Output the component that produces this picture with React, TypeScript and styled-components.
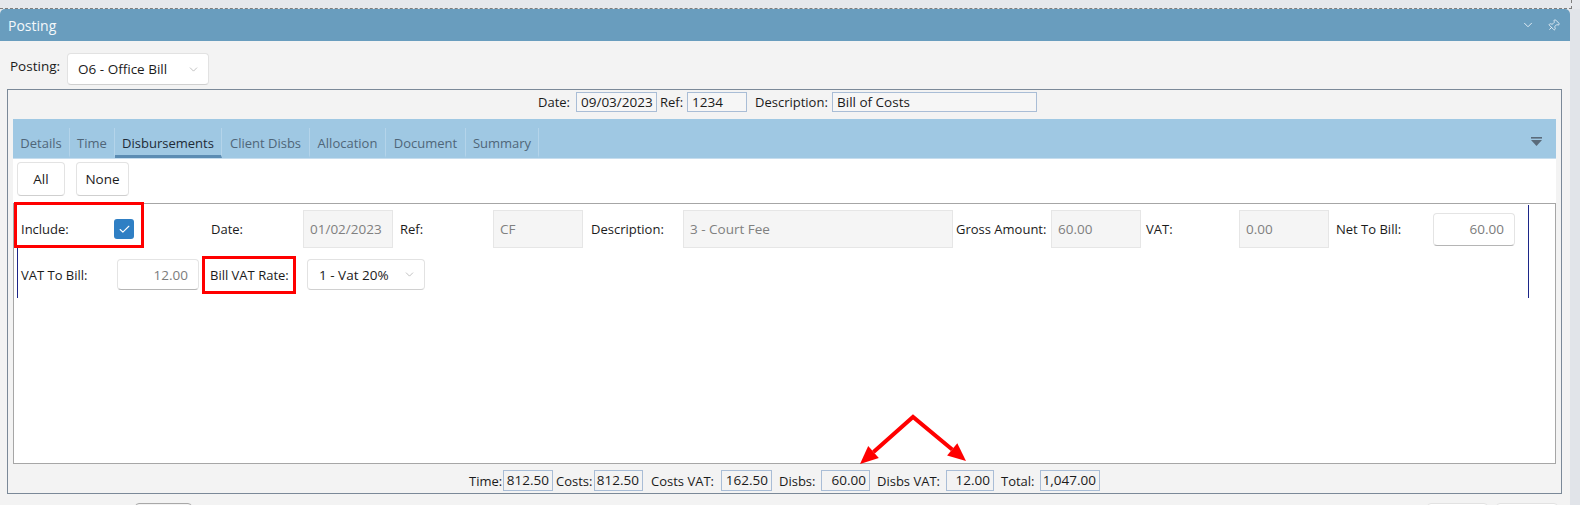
import React from "react";
import styled, { createGlobalStyle } from "styled-components";
import { ChevronDown, Pin, Check } from "lucide-react";

const GlobalStyle = createGlobalStyle`
  html, body {
    margin: 0;
    padding: 0;
    background: #e6e8ec;
    overflow: hidden;
    font-family: "Open Sans", "Noto Sans", sans-serif;
    font-size: 13px;
    color: #1b1b1b;
  }
  * { box-sizing: border-box; }
`;

const Page = styled.div`
  position: relative;
  width: 1580px;
  height: 505px;
  overflow: hidden;
  display: flex;
  flex-direction: column;
`;

const TopStrip = styled.div`
  flex: none;
  width: 1572px;
  height: 9px;
  border-bottom: 1px dashed #7d7d7d;
  border-right: 1px dashed #7d7d7d;
`;

const MainRow = styled.div`
  flex: 1;
  display: flex;
  min-height: 0;
`;

const Window = styled.div`
  width: 1570px;
  background: #f3f3f3;
  border-radius: 5px 5px 0 0;
  display: flex;
  flex-direction: column;
`;

const Gutter = styled.div`
  flex: 1;
  background: #e1e4e9;
`;

const TitleBar = styled.div`
  height: 32px;
  flex: none;
  background: #699dbe;
  border-radius: 5px 5px 0 0;
  display: flex;
  align-items: center;
  padding: 0 10px 0 8px;
  color: #f4f8fb;
  font-size: 14px;
`;

const TitleText = styled.span`
  flex: 1;
`;

const TitleIcons = styled.div`
  display: flex;
  align-items: center;
  gap: 12px;
  color: #e8f1f8;
`;

const PinIcon = styled(Pin)`
  transform: rotate(45deg);
`;

const PostingRow = styled.div`
  height: 48px;
  flex: none;
  display: flex;
  align-items: flex-start;
  gap: 7px;
  padding: 12px 0 0 10px;
`;

const PostingLabel = styled.span`
  line-height: 20px;
  padding-top: 3px;
  font-size: 13.5px;
`;

const Select = styled.div<{ $w: number }>`
  width: ${(p) => p.$w}px;
  height: 32px;
  background: #fff;
  border: 1px solid #e2e2e2;
  border-bottom-color: #d0d0d0;
  border-radius: 4px;
  padding: 0 8px 0 10px;
  display: flex;
  align-items: center;
  justify-content: space-between;
  font-size: 13.5px;
  color: #1b1b1b;
`;

const GroupBox = styled.div`
  margin-left: 7px;
  width: 1555px;
  height: 405px;
  flex: none;
  border: 1px solid #7b8998;
  display: flex;
  flex-direction: column;
  padding: 0 5px;
`;

const HeaderRow = styled.div`
  height: 29px;
  flex: none;
  display: flex;
  align-items: flex-start;
  justify-content: center;
  padding: 2px 0 0 6px;
`;

const HeaderLabel = styled.span<{ $w: number }>`
  width: ${(p) => p.$w}px;
  line-height: 20px;
  white-space: nowrap;
`;

const HeaderBox = styled.div<{ $w: number; $mr?: number }>`
  width: ${(p) => p.$w}px;
  margin-right: ${(p) => p.$mr ?? 0}px;
  height: 20px;
  border: 1px solid #a9bdd6;
  background: #f6f6f6;
  padding: 0 4px;
  line-height: 18px;
  font-size: 13.5px;
  white-space: nowrap;
`;

const TabBar = styled.div`
  height: 40px;
  flex: none;
  background: #9fc8e3;
  border-bottom: 1px solid #c6ddee;
  display: flex;
  align-items: flex-end;
`;

const Tab = styled.div<{ $w: number; $active?: boolean }>`
  width: ${(p) => p.$w}px;
  height: 30px;
  display: flex;
  align-items: center;
  justify-content: center;
  padding-top: 2px;
  border-right: 1px solid #b4d4ea;
  border-bottom: 3px solid ${(p) => (p.$active ? "#5b8cb3" : "transparent")};
  color: ${(p) => (p.$active ? "#1e2b37" : "#4f6679")};
  font-size: 13px;
  white-space: nowrap;
`;

const FilterIcon = styled.svg`
  margin-left: auto;
  margin-right: 14px;
  align-self: center;
  margin-top: 5px;
`;

const TabContent = styled.div`
  flex: 1;
  background: #fff;
  display: flex;
  flex-direction: column;
  min-height: 0;
`;

const ButtonRow = styled.div`
  display: flex;
  gap: 11px;
  padding: 3px 4px 0;
`;

const PlainButton = styled.div<{ $w: number }>`
  width: ${(p) => p.$w}px;
  height: 34px;
  background: #fff;
  border: 1px solid #e3e3e3;
  border-bottom-color: #cfcfcf;
  border-radius: 4px;
  display: flex;
  align-items: center;
  justify-content: center;
  font-size: 13.5px;
`;

const ListPanel = styled.div`
  margin-top: 7px;
  flex: 1;
  border: 1px solid #a6a6a6;
  padding: 1px 0 0 3px;
`;

const Item = styled.div`
  width: 1512px;
  border-right: 1px solid #1c2688;
`;

const FieldRow = styled.div<{ $first?: boolean }>`
  display: flex;
  align-items: center;
  ${(p) =>
    p.$first
      ? `height: 43px; padding: 5px 0 0 4px;`
      : `height: 50px; padding: 11px 0 8px 3px; border-left: 1px solid #1c2688;`}
`;

const Annotated = styled.div<{ $w: number; $ml?: number }>`
  position: relative;
  width: ${(p) => p.$w}px;
  margin-left: ${(p) => p.$ml ?? 0}px;
  flex: none;
  display: flex;
  align-items: center;
  align-self: stretch;
`;

const RedBox = styled.div<{ $l: number; $t: number; $w: number; $h: number }>`
  position: absolute;
  left: ${(p) => p.$l}px;
  top: ${(p) => p.$t}px;
  width: ${(p) => p.$w}px;
  height: ${(p) => p.$h}px;
  border: 3px solid #ff0000;
  pointer-events: none;
`;

const FieldLabel = styled.span<{ $w: number }>`
  width: ${(p) => p.$w}px;
  flex: none;
  white-space: nowrap;
  font-size: 13px;
`;

const Checkbox = styled.div`
  width: 20px;
  height: 20px;
  border-radius: 3px;
  background: #2f7fc4;
  display: flex;
  align-items: center;
  justify-content: center;
  color: #fff;
`;

const ReadOnlyBox = styled.div<{ $w: number; $mr?: number }>`
  width: ${(p) => p.$w}px;
  margin-right: ${(p) => p.$mr ?? 0}px;
  flex: none;
  height: 38px;
  background: #f5f5f5;
  border: 1px solid #e6e6e6;
  color: #808080;
  padding-left: 6px;
  display: flex;
  align-items: center;
  white-space: nowrap;
  font-size: 13.5px;
`;

const NumberBox = styled.div<{ $w: number; $h: number }>`
  width: ${(p) => p.$w}px;
  height: ${(p) => p.$h}px;
  flex: none;
  background: #fff;
  border: 1px solid #e4e4e4;
  border-bottom-color: #b5b5b5;
  border-radius: 4px;
  color: #7c7c7c;
  padding-right: 10px;
  display: flex;
  align-items: center;
  justify-content: flex-end;
  font-size: 13.5px;
`;

const RateSelect = styled(Select)`
  height: 31px;
  padding-left: 11px;
  flex: none;
`;

const TotalsRow = styled.div`
  height: 29px;
  flex: none;
  display: flex;
  align-items: center;
  justify-content: center;
  padding-top: 4px;
`;

const TotalLabel = styled.span<{ $w: number }>`
  width: ${(p) => p.$w}px;
  white-space: nowrap;
`;

const TotalBox = styled.div<{ $w: number; $mr?: number }>`
  width: ${(p) => p.$w}px;
  margin-right: ${(p) => p.$mr ?? 0}px;
  height: 21px;
  border: 1px solid #a9bdd6;
  padding-right: 3px;
  text-align: right;
  line-height: 19px;
  font-size: 13.5px;
  white-space: nowrap;
`;

const Footer = styled.div`
  display: flex;
  gap: 8px;
  padding: 9px 12px 0 135px;
`;

const FooterButton = styled.div<{ $w: number; $muted?: boolean }>`
  width: ${(p) => p.$w}px;
  height: 30px;
  border-radius: 4px;
  background: ${(p) => (p.$muted ? "#f3f3f3" : "#fff")};
  border: 1px solid ${(p) => (p.$muted ? "#a8a8a8" : "#e2e2e2")};
  &:nth-child(2) {
    margin-left: auto;
  }
`;

const Overlay = styled.svg`
  position: absolute;
  left: 0;
  top: 0;
  pointer-events: none;
`;

const tabs = [
  { name: "Details", w: 57 },
  { name: "Time", w: 45 },
  { name: "Disbursements", w: 107, active: true },
  { name: "Client Disbs", w: 88 },
  { name: "Allocation", w: 76 },
  { name: "Document", w: 80 },
  { name: "Summary", w: 73 },
];

const totals = [
  { label: "Time:", lw: 34, value: "812.50", bw: 50, mr: 3 },
  { label: "Costs:", lw: 38, value: "812.50", bw: 49, mr: 8 },
  { label: "Costs VAT:", lw: 70, value: "162.50", bw: 51, mr: 7 },
  { label: "Disbs:", lw: 42, value: "60.00", bw: 49, mr: 7 },
  { label: "Disbs VAT:", lw: 69, value: "12.00", bw: 48, mr: 7 },
  { label: "Total:", lw: 39, value: "1,047.00", bw: 60, mr: 0 },
];

export default function App() {
  return (
    <>
      <GlobalStyle />
      <Page>
        <TopStrip />
        <MainRow>
          <Window>
            <TitleBar>
              <TitleText>Posting</TitleText>
              <TitleIcons>
                <ChevronDown size={14} strokeWidth={1.6} />
                <PinIcon size={13} strokeWidth={1.6} />
              </TitleIcons>
            </TitleBar>

            <PostingRow>
              <PostingLabel>Posting:</PostingLabel>
              <Select $w={142}>
                <span>O6 - Office Bill</span>
                <ChevronDown size={13} strokeWidth={1.3} color="#a8a8a8" />
              </Select>
            </PostingRow>

            <GroupBox>
              <HeaderRow>
                <HeaderLabel $w={38}>Date:</HeaderLabel>
                <HeaderBox $w={81} $mr={3}>09/03/2023</HeaderBox>
                <HeaderLabel $w={27}>Ref:</HeaderLabel>
                <HeaderBox $w={60} $mr={8}>1234</HeaderBox>
                <HeaderLabel $w={77}>Description:</HeaderLabel>
                <HeaderBox $w={205}>Bill of Costs</HeaderBox>
              </HeaderRow>

              <TabBar>
                {tabs.map((t) => (
                  <Tab key={t.name} $w={t.w} $active={t.active}>
                    {t.name}
                  </Tab>
                ))}
                <FilterIcon width="11" height="9" viewBox="0 0 11 9">
                  <rect x="0" y="0" width="11" height="1.6" fill="#5a6b7b" />
                  <path d="M0 3 L11 3 L5.5 9 Z" fill="#5a6b7b" />
                </FilterIcon>
              </TabBar>

              <TabContent>
                <ButtonRow>
                  <PlainButton $w={48}>All</PlainButton>
                  <PlainButton $w={53}>None</PlainButton>
                </ButtonRow>
                <ListPanel>
                  <Item>
                    <FieldRow $first>
                      <Annotated $w={190}>
                        <FieldLabel $w={93}>Include:</FieldLabel>
                        <Checkbox>
                          <Check size={13} strokeWidth={2} />
                        </Checkbox>
                        <RedBox $l={-7} $t={-8} $w={130} $h={46} />
                      </Annotated>
                      <FieldLabel $w={92}>Date:</FieldLabel>
                      <ReadOnlyBox $w={90} $mr={7}>01/02/2023</ReadOnlyBox>
                      <FieldLabel $w={93}>Ref:</FieldLabel>
                      <ReadOnlyBox $w={90} $mr={8}>CF</ReadOnlyBox>
                      <FieldLabel $w={92}>Description:</FieldLabel>
                      <ReadOnlyBox $w={270} $mr={3}>3 - Court Fee</ReadOnlyBox>
                      <FieldLabel $w={95}>Gross Amount:</FieldLabel>
                      <ReadOnlyBox $w={90} $mr={5}>60.00</ReadOnlyBox>
                      <FieldLabel $w={93}>VAT:</FieldLabel>
                      <ReadOnlyBox $w={90} $mr={7}>0.00</ReadOnlyBox>
                      <FieldLabel $w={97}>Net To Bill:</FieldLabel>
                      <NumberBox $w={82} $h={33}>60.00</NumberBox>
                    </FieldRow>
                    <FieldRow>
                      <FieldLabel $w={96}>VAT To Bill:</FieldLabel>
                      <NumberBox $w={82} $h={31}>12.00</NumberBox>
                      <Annotated $w={97} $ml={11}>
                        <FieldLabel $w={97}>Bill VAT Rate:</FieldLabel>
                        <RedBox $l={-8} $t={-3} $w={94} $h={38} />
                      </Annotated>
                      <RateSelect $w={118}>
                        <span>1 - Vat 20%</span>
                        <ChevronDown size={13} strokeWidth={1.3} color="#a8a8a8" />
                      </RateSelect>
                    </FieldRow>
                  </Item>
                </ListPanel>
              </TabContent>

              <TotalsRow>
                {totals.map((t) => (
                  <React.Fragment key={t.label}>
                    <TotalLabel $w={t.lw}>{t.label}</TotalLabel>
                    <TotalBox $w={t.bw} $mr={t.mr}>
                      {t.value}
                    </TotalBox>
                  </React.Fragment>
                ))}
              </TotalsRow>
            </GroupBox>

            <Footer>
              <FooterButton $w={57} $muted />
              <FooterButton $w={61} />
              <FooterButton $w={62} />
            </Footer>
          </Window>
          <Gutter />
        </MainRow>

        <Overlay width="1580" height="505" viewBox="0 0 1580 505">
          <polyline
            points="873.5,452 913,417 952.2,449.5"
            fill="none"
            stroke="#ff0000"
            strokeWidth="4"
            strokeLinejoin="miter"
          />
          <polygon points="860,464 878.8,458 868.2,446.1" fill="#ff0000" />
          <polygon points="966,461 947.1,455.6 957.3,443.3" fill="#ff0000" />
        </Overlay>
      </Page>
    </>
  );
}
